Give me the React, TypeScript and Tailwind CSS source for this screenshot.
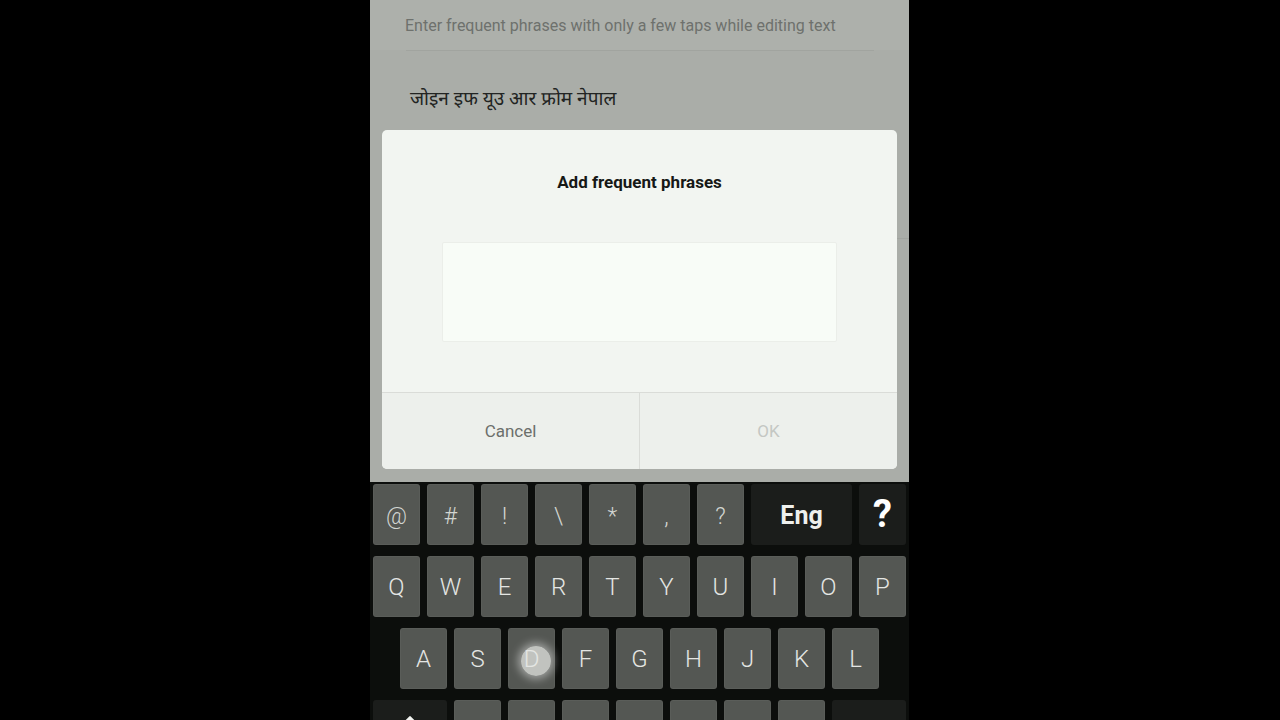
const row1 = ['@', '#', '!', '\\', '*', ',', '?'];
const row2 = ['Q', 'W', 'E', 'R', 'T', 'Y', 'U', 'I', 'O', 'P'];
const row3 = ['A', 'S', 'D', 'F', 'G', 'H', 'J', 'K', 'L'];
// bottom row: only the top edge shows in the shot, labels are off-screen
const row4 = ['z', 'x', 'c', 'v', 'b', 'n', 'm'];

function Key({ label, pressed = false, symbol = false }: { label?: string; pressed?: boolean; symbol?: boolean }) {
    return (
        <div
            className={`relative flex h-[61px] w-[47px] shrink-0 items-center justify-center rounded-[3px] bg-[#545753] font-light shadow-[inset_0_0_0_1px_rgba(255,255,255,0.04)] ${
                symbol ? 'pt-[5px] text-[23px] text-[#d2d5d1]' : 'pt-[1px] text-[24px] text-[#e4e6e3]'
            }`}
        >
            {pressed && (
                <span className="absolute left-[13px] top-[18px] h-[30px] w-[30px] rounded-full bg-[#dcdedb]/80 shadow-[0_0_8px_3px_rgba(255,255,255,0.45)]" />
            )}
            {label && <span className="relative">{label}</span>}
        </div>
    );
}

export default function App() {
    return (
        <div className="flex h-[720px] w-[1280px] overflow-hidden bg-black pl-[370px]" style={{ fontFamily: 'Roboto, "Noto Sans", "Noto Sans Devanagari", sans-serif' }}>
            <div className="flex w-[539px] flex-col">
                {/* dimmed settings page */}
                <div className="relative h-[482px] shrink-0 bg-[#aaada8]">
                    <div className="flex h-[50px] items-center bg-[#adb0ab] pl-[35px] pt-[2px] text-[16px] text-[#6e716d]">
                        Enter frequent phrases with only a few taps while editing text
                    </div>
                    <div className="ml-[36px] mr-[35px] h-px bg-[#a1a49f]" />
                    <div className="flex h-[98px] items-center pl-[40px] pt-[2px] text-[19px] text-[#222422]" style={{ fontFamily: '"Noto Sans Devanagari", "Noto Sans", "Lohit Devanagari", "FreeSans", sans-serif' }}>
                        जोइन इफ यूउ आर फ्रोम नेपाल
                    </div>
                    <div className="ml-[35px] mt-[89px] h-px bg-[#a1a49f]" />

                    {/* dialog */}
                    <div className="absolute left-[12px] top-[130px] flex h-[339px] w-[515px] flex-col overflow-hidden rounded-[5px] bg-[#f2f5f1]">
                        <div className="pt-[40px] text-center text-[17px] font-bold leading-[24px] text-[#161816]">Add frequent phrases</div>
                        <div className="mx-[60px] mt-[48px] h-[100px] rounded-[2px] border border-[#ebeee9] bg-[#f8fcf7]" />
                        <div className="mt-auto flex h-[77px] border-t border-[#dadcd8] bg-[#edf0ec] text-[17px]">
                            <div className="flex flex-1 items-center justify-center pt-[2px] text-[#6c6f6b]">Cancel</div>
                            <div className="w-px bg-[#dadcd8]" />
                            <div className="flex flex-1 items-center justify-center pt-[2px] text-[#c4c7c3]">OK</div>
                        </div>
                    </div>
                </div>

                {/* keyboard */}
                <div className="flex flex-1 flex-col gap-[11px] bg-[#0c0e0c] pt-[2px]">
                    <div className="flex gap-[7px] pl-[3px]">
                        {row1.map((k) => (
                            <Key key={k} label={k} symbol />
                        ))}
                        <div className="flex h-[61px] w-[101px] items-center justify-center rounded-[3px] bg-[#1b1d1b] pt-[3px] text-[25px] font-bold text-[#eef0ed]">Eng</div>
                        <div className="flex h-[61px] w-[47px] items-center justify-center rounded-[3px] bg-[#1b1d1b] text-[38px] font-bold text-white">?</div>
                    </div>
                    <div className="flex gap-[7px] pl-[3px]">
                        {row2.map((k) => (
                            <Key key={k} label={k} />
                        ))}
                    </div>
                    <div className="flex gap-[7px] pl-[30px]">
                        {row3.map((k) => (
                            <Key key={k} label={k} pressed={k === 'D'} />
                        ))}
                    </div>
                    <div className="flex gap-[7px] pl-[3px]">
                        <div className="flex h-[61px] w-[74px] shrink-0 items-start justify-center rounded-[3px] bg-[#1b1d1b] pt-[14px]">
                            <svg width="26" height="26" viewBox="0 0 24 24" fill="none" stroke="#f2f4f1" strokeWidth="2" strokeLinejoin="round">
                                <path d="M12 3 L21 12 H16 V20 H8 V12 H3 Z" fill="#f2f4f1" />
                            </svg>
                        </div>
                        {row4.map((k) => (
                            <Key key={k} />
                        ))}
                        <div className="flex h-[61px] w-[74px] shrink-0 items-start justify-center rounded-[3px] bg-[#1b1d1b] pt-[19px]">
                            <svg width="34" height="24" viewBox="0 0 34 24" fill="none" stroke="#e8eae7" strokeWidth="2">
                                <path d="M10 2 H31 V22 H10 L2 12 Z" />
                                <path d="M16 8 L24 16 M24 8 L16 16" />
                            </svg>
                        </div>
                    </div>
                </div>
            </div>
        </div>
    );
}
